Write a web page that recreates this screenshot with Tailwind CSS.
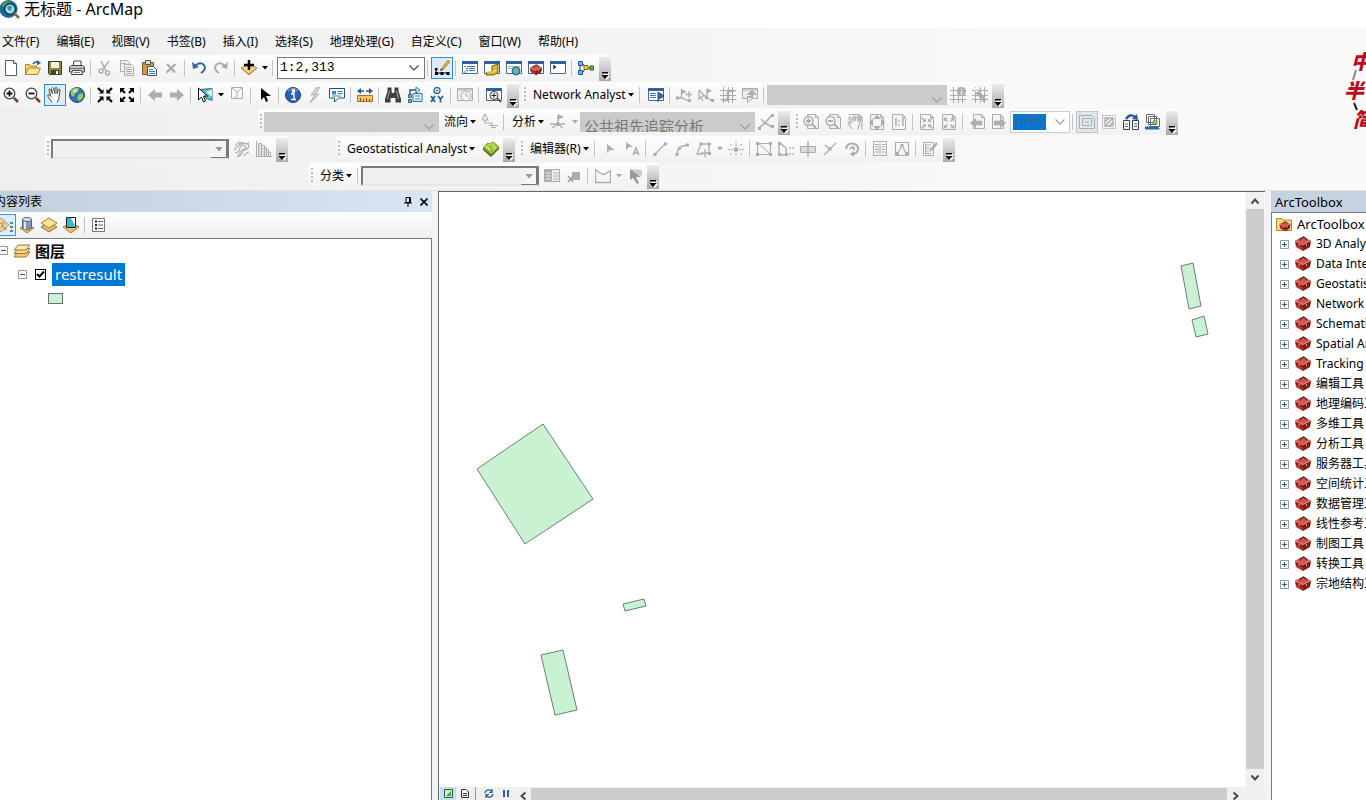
<!DOCTYPE html>
<html lang="zh-CN">
  <head>
    <title>无标题 - ArcMap</title>
    <meta charset="utf-8">
    <meta name="viewport" content="width=device-width, initial-scale=1.0">
    <script src="https://cdn.jsdelivr.net/npm/@tailwindcss/browser@4"></script>
  </head>
  <body class="flex h-screen flex-col overflow-hidden bg-[#f4f4f4] font-['Noto_Sans','Noto_Sans_CJK_SC',sans-serif] text-[12px] leading-4 text-black">
    <!-- icon sprite -->
    <svg class="hidden" xmlns="http://www.w3.org/2000/svg">
      <symbol id="app" viewBox="0 0 20 20"><circle cx="8.500" cy="9" r="9" fill="#1d6d98"/><path d="M2 5q4-5 9-3l3 3-4 1-2 4-4-1z" fill="#5fa64e"/><circle cx="10" cy="9" r="5.500" fill="#9fe0ee" stroke="#0c4767" stroke-width="2"/><path d="M7 7q3-3 5 0l-1 4-3-1z" fill="#3a93a8"/><path d="M14 13l5 5" stroke="#8a6a33" stroke-width="2.500"/></symbol>
      <symbol id="new" viewBox="0 0 16 16"><path d="M2.500.5h8l3 3v12h-11z" fill="#fff" stroke="#4f5f6d"/><path d="M10.500.5v3h3" fill="#dce6ee" stroke="#4f5f6d"/></symbol>
      <symbol id="open" viewBox="0 0 16 16"><path d="M.5 14.500v-10h4l1 1.500h6v3" fill="#f3d36a" stroke="#a8832a"/><path d="M.5 14.500l3-6.500h12l-3 6.500z" fill="#ffe695" stroke="#a8832a"/><path d="M8 4q1-2.500 5-2" fill="none" stroke="#26609c" stroke-width="1.500"/><path d="M12 0l4 3-4 2.500z" fill="#26609c"/></symbol>
      <symbol id="save" viewBox="0 0 16 16"><path d="M1.500 1.500h13v13h-12l-1-1z" fill="#8e8642" stroke="#3d3920"/><path d="M4 2h8v6H4z" fill="#f3f1dc"/><path d="M4 10h8v5H4z" fill="#47422c"/><path d="M9 11h2v3H9z" fill="#fff"/></symbol>
      <symbol id="print" viewBox="0 0 16 16"><path d="M4 6l1-5h7v5" fill="#fff" stroke="#444"/><path d="M.5 7l2-1.500h11l2 1.500v5H.5z" fill="#c9c9c2" stroke="#444"/><path d="M3.500 10.500h9l1 4h-11z" fill="#fff" stroke="#444"/><path d="M11 8h2" stroke="#c8a33a"/><path d="M5 12.500h6M1 8.500h14" stroke="#777"/></symbol>
      <symbol id="cut" viewBox="0 0 16 16"><g fill="none" stroke="currentColor" stroke-width="1.500"><path d="M4 1l5 10M12 1L6 9"/><circle cx="4" cy="11" r="2"/><circle cx="10.500" cy="13" r="2"/></g></symbol>
      <symbol id="copy" viewBox="0 0 16 16"><g fill="#efefef" stroke="currentColor"><path d="M1.500.5h7l2 2v9h-9z"/><path d="M5.500 4.500h7l2 2v9h-9z"/><path d="M7 7.500h5M7 9.500h6M7 11.500h6M7 13.500h6M3 3.500h4"/></g></symbol>
      <symbol id="paste" viewBox="0 0 16 16"><path d="M1.500 2.500h11v12h-11z" fill="#cf9a43" stroke="#7d5a22"/><path d="M4.500.5h5v4h-5z" fill="#ddd" stroke="#555"/><path d="M6.500 6.500h6l3 3v6h-9z" fill="#fff" stroke="#2f5587"/><path d="M8 9.500h4M8 11.500h6M8 13.500h6" stroke="#3f74b5"/></symbol>
      <symbol id="del" viewBox="0 0 16 16"><path d="M4 4l8 8.500M12.500 4L3.500 12.500" stroke="currentColor" stroke-width="2.400"/></symbol>
      <symbol id="undo" viewBox="0 0 16 16"><path d="M4 6q5-5 9-1 3 4-3 8" fill="none" stroke="#31659c" stroke-width="2"/><path d="M1 2l1 7 6-2z" fill="#31659c"/></symbol>
      <symbol id="redo" viewBox="0 0 16 16"><path d="M12 6q-5-5-9-1-3 4 3 8" fill="none" stroke="currentColor" stroke-width="2"/><path d="M15 2l-1 7-6-2z" fill="currentColor"/></symbol>
      <symbol id="add" viewBox="0 0 16 16"><path d="M0 8l8-4 8 4-8 7z" fill="#f6d488" stroke="#b38b3d"/><path d="M0 8l8 6 8-6" fill="none" stroke="#b38b3d"/><path d="M8 0v10M3 5h10" stroke="#000" stroke-width="2.500"/></symbol>
      <symbol id="editor" viewBox="0 0 16 16"><path d="M2 9v4h12" fill="none" stroke="#000"/><path d="M1 8h2.500v2.500H1zM1 12h3v3H1zM6.500 12h3v3h-3zM12.500 12h3v3h-3z"/><path d="M7 9l7-9 2 2-7 8z" fill="#e5a939" stroke="#8a6a33" stroke-width=".6"/><path d="M6 11l1-2.500L9 10z" fill="#333"/></symbol>
      <symbol id="frame" viewBox="0 0 16 16"><path d="M.5 1.500h15v12H.5z" fill="#fff" stroke="#44668f"/><path d="M0 1h16v3H0z" fill="#31609a"/></symbol>
      <symbol id="toc" viewBox="0 0 16 16"><use href="#frame"/><path d="M2 6.500h2M5 6.500h8M4 8.500h2M7 8.500h6M4 10.500h2M7 10.500h6M2 12h2" stroke="#3178bd"/></symbol>
      <symbol id="catalog" viewBox="0 0 16 16"><use href="#frame"/><path d="M8 6l6-2v8l-4 3H2l1-3h5z" fill="#d5bd20" stroke="#776609"/><path d="M3 12h6l3-2" stroke="#fff4a0" fill="none"/></symbol>
      <symbol id="search" viewBox="0 0 16 16"><use href="#frame"/><path d="M2 6.500h12M2 8.500h5" stroke="#8cafd0"/><circle cx="10" cy="11" r="4" fill="#50a9cc" stroke="#25648a"/><path d="M8 10l3-2 1 3-2 2z" fill="#83bf52"/></symbol>
      <symbol id="box" viewBox="0 0 16 16"><path d="M0 4.500L8 1l8 3.500L8 9z" fill="#d2574c"/><path d="M0 4.500L8 8.500V15L1 11z" fill="#b3302b"/><path d="M8 8.500l8-4-1 6.500-7 4z" fill="#8c1d1b"/><path d="M5 4.500V3l3.500-2L11 2.500V4" fill="none" stroke="#4d1616" stroke-width="1.200"/><path d="M0 4.500l8 4 8-4" fill="none" stroke="#e9a08e" stroke-width=".8"/><path d="M.5 7.500L8 11.200l7.500-3.700" fill="none" stroke="#5c1414"/><path d="M4 8v2M11.500 8v2" stroke="#e2a98c"/></symbol>
      <symbol id="toolbox" viewBox="0 0 16 16"><use href="#frame"/><use href="#box" x="2" y="4" width="12" height="12"/></symbol>
      <symbol id="python" viewBox="0 0 16 16"><use href="#frame"/><path d="M3 5.500l2.500 1.500L3 8.500" fill="none" stroke="#000" stroke-width="1.200"/></symbol>
      <symbol id="model" viewBox="0 0 16 16"><path d="M2 4v8h3L8 8h6M4 3l4 5" fill="none" stroke="#333"/><path d="M.5 1.500h4v4h-4zM.5 10.500h4v4h-4z" fill="#69b4ed" stroke="#155c9c"/><path d="M6 5.500h4v4H6z" fill="#ead34c" stroke="#816d0c"/><path d="M12 6h3.500v4H12z" fill="#65b84d" stroke="#286921"/></symbol>
      <symbol id="zin" viewBox="0 0 16 16"><circle cx="6.500" cy="6.500" r="5.300" fill="#fff" stroke="#444" stroke-width="1.300"/><path d="M11 11l4 4" stroke="#7d3c2b" stroke-width="2.500"/><path d="M3.500 6.500h6M6.500 3.500v6" stroke="#111" stroke-width="1.800"/></symbol>
      <symbol id="zout" viewBox="0 0 16 16"><circle cx="6.500" cy="6.500" r="5.300" fill="#fff" stroke="#444" stroke-width="1.300"/><path d="M11 11l4 4" stroke="#7d3c2b" stroke-width="2.500"/><path d="M3.500 6.500h6" stroke="#111" stroke-width="1.800"/></symbol>
      <symbol id="hand" viewBox="0 0 16 16"><path d="M5 15.500L1 9.500q-1-2 1-2l2 2-2-6q0-2 1.500-1l2 4-1-5q1-2 2 0l1.500 5V1q1.500-1 2 0v5.500l1.500-4q1.500-1 1.500 1l-1 6v2l-2 4" fill="#fff" stroke="#444"/></symbol>
      <symbol id="globe" viewBox="0 0 16 16"><circle cx="8" cy="8" r="7.500" fill="#2d73ae" stroke="#244b70"/><path d="M2 4q4-5 8-3l-1 4-3 1-1 4-3-2zM10 7l4-1v5l-4 3-2-3z" fill="#9dc66b"/><circle cx="6" cy="4" r="2" fill="#e4f5e8" opacity=".6"/></symbol>
      <symbol id="fin" viewBox="0 0 16 16"><path d="M1 1l4 4M15 1l-4 4M1 15l4-4M15 15l-4-4" stroke="currentColor" stroke-width="2"/><path d="M6.500 2v4.500H2zM9.500 2v4.500H14zM6.500 14V9.500H2zM9.500 14V9.500H14z" fill="currentColor"/></symbol>
      <symbol id="fout" viewBox="0 0 16 16"><path d="M2 2l4 4M14 2l-4 4M2 14l4-4M14 14l-4-4" stroke="currentColor" stroke-width="2"/><path d="M1 6V1h5zM15 6V1h-5zM1 10v5h5zM15 10v5h-5z" fill="currentColor"/></symbol>
      <symbol id="prev" viewBox="0 0 16 16"><path d="M1 8l7-6v3.500h7v5H8V14z" fill="currentColor"/></symbol>
      <symbol id="next" viewBox="0 0 16 16"><path d="M15 8L8 2v3.500H1v5h7V14z" fill="currentColor"/></symbol>
      <symbol id="sel" viewBox="0 0 16 16"><path d="M3 2.500l12-1v12l-6-2z" fill="#57bfc9" stroke="#41666e"/><path d="M9 5l6-3v8" fill="#d8f3f3"/><path d="M1.500 1v12l3-3 2 5 2-1-2-5h4z" fill="#fff" stroke="#111"/></symbol>
      <symbol id="clr" viewBox="0 0 16 16"><path d="M2.500.5h11v11h-11zM3 1l5 4 5-4M8 5v4l-3 2" fill="none" stroke="currentColor"/></symbol>
      <symbol id="arrow" viewBox="0 0 16 16"><path d="M4 1v12l3-3 2 5 2-1-2-5h5z" fill="currentColor"/></symbol>
      <symbol id="info" viewBox="0 0 16 16"><circle cx="8" cy="8" r="7.500" fill="#2864ac" stroke="#163f75"/><path d="M3 4q5-5 10 0" stroke="#88b1df" fill="none"/><path d="M6 7h3v5M6 12.500h5M7.500 3h2v2h-2z" fill="none" stroke="#fff" stroke-width="1.400"/></symbol>
      <symbol id="bolt" viewBox="0 0 16 16"><path d="M10 0L4 8h4l-5 8 9-9H8l5-7z" fill="#d8d8d8" stroke="currentColor"/></symbol>
      <symbol id="html" viewBox="0 0 16 16"><path d="M.5 1.500h15v9.500h-6l-4 4v-4h-5z" fill="#fff" stroke="#24506f"/><path d="M3 4h4v3.500H3z" fill="#3b8ab8"/><path d="M8.500 4.500h5M8.500 6.500h5M3 9h9" stroke="#3179a6"/></symbol>
      <symbol id="ruler" viewBox="0 0 16 16"><path d="M.5 8.500h15v6H.5z" fill="#f1c56e" stroke="#a0722e"/><path d="M3.500 11v3M6.500 12v2M9.500 11v3M12.500 12v2" stroke="#775320"/><path d="M2 4h5M9 4h5" stroke="#245b95" stroke-width="1.500"/><path d="M0 4l4-3v6zM16 4l-4-3v6z" fill="#245b95"/></symbol>
      <symbol id="find" viewBox="0 0 16 16"><path d="M2.500.5h4V4l.5 2h2l.5-2V.5h4V4L16 12v3.500h-5.500V11h-5v4.500H0V12l2.500-8z" fill="#3f3f3f"/><path d="M4.500 4L2.500 12M11.500 4l2 8" stroke="#ababab"/></symbol>
      <symbol id="route" viewBox="0 0 16 16"><path d="M3 7V3h6" fill="none" stroke="#245b95" stroke-width="1.500"/><path d="M9 0l4 3-4 3zM6 6.500h9v8H6z" fill="#e7f4fb" stroke="#2874a2"/><path d="M1.500 7.500h3v3h-3zM1.500 12.500h3v3h-3z" fill="#73b1d0" stroke="#286a91"/><path d="M8 9h5M8 12h5" stroke="#3d829d"/></symbol>
      <symbol id="xy" viewBox="0 0 16 16"><circle cx="8" cy="3.500" r="3" fill="none" stroke="#2371a4" stroke-width="1.400"/><circle cx="8" cy="3.500" r="1" fill="#2371a4"/><path d="M2 9l4 6M6 9l-4 6M9 9l2.500 3L14 9M11.500 12v3.500" stroke="#245e95" stroke-width="1.700" fill="none"/></symbol>
      <symbol id="time" viewBox="0 0 16 16"><path d="M.5 1.500h15v12H.5zM1 3h14" fill="#eee" stroke="currentColor"/><circle cx="9" cy="9" r="5" fill="#f5f5f5" stroke="currentColor"/><path d="M9 5.500V9h3" stroke="currentColor" fill="none"/></symbol>
      <symbol id="viewer" viewBox="0 0 16 16"><use href="#frame"/><circle cx="8" cy="8.500" r="4" fill="#fff" stroke="#333"/><path d="M5.500 8.500h5M8 6v5" stroke="#222"/><path d="M11 11l4 4" stroke="#8a4b2d" stroke-width="2"/></symbol>
      <symbol id="nawin" viewBox="0 0 16 16"><use href="#frame"/><path d="M2 6.500h6M2 8.500h6M2 10.500h6" stroke="#4976a5"/><path d="M10 15V5l6 4-5 3" fill="#3468b2" stroke="#264b82"/></symbol>
      <symbol id="flag1" viewBox="0 0 16 16"><path d="M1 11h5l7 3M5.500 11V2M13 4v7M9.500 7.500h6.500" fill="none" stroke="currentColor" stroke-width="1.300"/><path d="M5.500 2l5 3-5 2zM0 9.500h3v3H0zM12 12h3v3h-3z" fill="currentColor"/></symbol>
      <symbol id="flag2" viewBox="0 0 16 16"><path d="M1 3v9l2-2 2 4M1 3l6 6H4M9 10V2M8 10l6 4" fill="none" stroke="currentColor" stroke-width="1.300"/><path d="M9 1l5 3-5 2zM7 9h3v3H7zM13 12h3v3h-3z" fill="currentColor"/></symbol>
      <symbol id="grid" viewBox="0 0 16 16"><path d="M0 3.500h16M0 8.500h16M0 12.500h16M3.500 0v16M8.500 0v16M12.500 0v16" stroke="currentColor"/></symbol>
      <symbol id="solve" viewBox="0 0 16 16"><use href="#grid"/><path d="M2 13h6V4h6" fill="none" stroke="currentColor" stroke-width="2.500"/></symbol>
      <symbol id="dirs" viewBox="0 0 16 16"><path d="M.5 1.500h15v10h-5l-5 4v-4h-5zM1 3h14" fill="#eee" stroke="currentColor"/><path d="M5 10h5V6M7 7l3-3 3 3z" fill="none" stroke="currentColor" stroke-width="1.800"/></symbol>
      <symbol id="gridi" viewBox="0 0 16 16"><use href="#grid"/><circle cx="11.500" cy="4.500" r="4.500" fill="currentColor"/><path d="M11.500 2v1M11.500 4v4" stroke="#fff" stroke-width="1.300"/></symbol>
      <symbol id="gridw" viewBox="0 0 16 16"><use href="#grid"/><path d="M4 3l9 11" stroke="currentColor" stroke-width="4"/><path d="M2 1l4 4" stroke="#eee" stroke-width="2"/></symbol>
      <symbol id="flow" viewBox="0 0 16 16"><path d="M0 6h6L3 0zM3 6v3h7v3M7 11.500h9M9 13.500h5M11 15.500h1" fill="none" stroke="currentColor" stroke-width="1.200"/></symbol>
      <symbol id="net" viewBox="0 0 16 16"><path d="M8 9V1M0 10h15M8 10l-6 4M8 10l5 4" fill="none" stroke="currentColor" stroke-width="1.500"/><path d="M8 0l6 3-6 2.500z" fill="currentColor"/><circle cx="8" cy="10" r="2" fill="currentColor"/></symbol>
      <symbol id="trace" viewBox="0 0 16 16"><path d="M1 14l6-5 7-8M3 5l4 4 7 4" fill="none" stroke="currentColor" stroke-width="1.500"/><path d="M0 13h3v3H0zM13 0h3v3h-3zM13 11h3v3h-3z" fill="currentColor"/></symbol>
      <symbol id="page" viewBox="0 0 16 16"><path d="M1.500.5h10l3 3v12h-13zM11.500.5v3h3" fill="#f4f4f4" stroke="currentColor"/></symbol>
      <symbol id="pageback" viewBox="0 0 16 16"><path d="M4.500.5h8l3 3v11h-11zM12.500.5v3h3" fill="#f4f4f4" stroke="currentColor"/></symbol>
      <symbol id="pzin" viewBox="0 0 16 16"><use href="#pageback"/><circle cx="5.500" cy="7" r="4.500" fill="#f6f6f6" stroke="currentColor" stroke-width="1.500"/><path d="M3 7h5M5.500 4.500v5M9 10l4 4" stroke="currentColor" stroke-width="2"/></symbol>
      <symbol id="pzout" viewBox="0 0 16 16"><use href="#pageback"/><circle cx="5.500" cy="7" r="4.500" fill="#f6f6f6" stroke="currentColor" stroke-width="1.500"/><path d="M3 7h5M9 10l4 4" stroke="currentColor" stroke-width="2"/></symbol>
      <symbol id="phand" viewBox="0 0 16 16"><path d="M2 .5h10l3 3v12M12 1v3h3M5 15L1 9q0-2 3 0L2 4q1-2 2 0l2 3V3q1-2 2 0v4l1-4q2-1 2 1v3l2-2q1 0 0 3l-2 7" fill="none" stroke="currentColor" stroke-width="1.200"/></symbol>
      <symbol id="pfull" viewBox="0 0 16 16"><use href="#page"/><path d="M8 1l4 4H4zM8 16l4-4H4zM0 8.500l4-4v8zM16 8.500l-4-4v8z" fill="currentColor"/></symbol>
      <symbol id="pone" viewBox="0 0 16 16"><use href="#page"/><path d="M4 6l1-1v7M11 6l1-1v7M8 6v1.500M8 10v1.500" fill="none" stroke="currentColor" stroke-width="1.500"/></symbol>
      <symbol id="pfin" viewBox="0 0 16 16"><use href="#page"/><use href="#fin" x="2" y="3" width="12" height="12"/></symbol>
      <symbol id="pfout" viewBox="0 0 16 16"><use href="#page"/><use href="#fout" x="2" y="3" width="12" height="12"/></symbol>
      <symbol id="pprev" viewBox="0 0 16 16"><use href="#pageback"/><use href="#prev" x="0" y="2" width="14" height="14"/></symbol>
      <symbol id="pnext" viewBox="0 0 16 16"><path d="M1.500.5h8l3 3v11h-11zM9.500.5v3h3" fill="#f4f4f4" stroke="currentColor"/><use href="#next" x="2" y="2" width="14" height="14"/></symbol>
      <symbol id="draft" viewBox="0 0 16 16"><path d="M.5 1.500h12l3 3v10H.5zM3.500 4.500h9v7h-9zM6 8h4" fill="none" stroke="currentColor"/></symbol>
      <symbol id="focus" viewBox="0 0 16 16"><path d="M1.500 1.500h13v13h-13z" fill="none" stroke="currentColor" stroke-dasharray="2 1"/><path d="M4 4h8v8H4zM4 12l8-8M4 8l4-4M8 12l4-4" fill="none" stroke="currentColor" stroke-width="1.300"/></symbol>
      <symbol id="layout" viewBox="0 0 16 16"><path d="M.5 6.500h6v9h-6zM9.500 6.500h6v9h-6z" fill="#fff" stroke="#334155"/><path d="M2 10h3M2 12.500h3M11 10h3M11 12.500h3" stroke="#466b99"/><path d="M3 5q4-6 9-2" fill="none" stroke="#24599b" stroke-width="2.400"/><path d="M9 5l6 1-1-6z" fill="#24599b"/></symbol>
      <symbol id="ddp" viewBox="0 0 16 16"><path d="M1.500.5h8v8h-8zM3.500 2.500h8v8h-8zM5.500 4.500h9v8h-9z" fill="#fff" stroke="#6a6a6a"/><path d="M8 7h4v3H8z" fill="#b4ca67" stroke="#4a6533" stroke-width=".6"/><path d="M0 12.500h13l2 3H0z" fill="#2d66a4"/></symbol>
      <symbol id="contour" viewBox="0 0 16 16"><path d="M1 5q4-5 8-3t6-1M0 9q4-3 5-5t9-1q2 3-2 6-3-1-4 3l-3 4M1 12q5-1 5-5t5-2q2 2-1 3-3 1-4 4l-3 4M10 15q1-3 5-4" fill="none" stroke="currentColor" stroke-width="1.200"/></symbol>
      <symbol id="hist" viewBox="0 0 16 16"><path d="M2 3h4v3h3v1h2v3h2v5H2z" fill="#dedede"/><path d="M.5 0v15.500H16M2.500 15V2.500h3V15M5.500 4.500h3V15M8.500 6.500h2V15M10.500 8.500h2V15M12.500 11.500h2V15" fill="none" stroke="currentColor"/></symbol>
      <symbol id="geo" viewBox="0 0 16 16"><path d="M0 7l5-5 2 1 3-2 6 5-8 8z" fill="#9cc636" stroke="#637c1e" stroke-width=".8"/><path d="M3 5l4 4M6 3l5 6M9 2.500l4 5" stroke="#e8f28b" stroke-width="1.200"/><path d="M2 7l6 6M7 4l3 6" stroke="#73962a"/><path d="M0 7v2l8 7 8-8V6l-8 8z" fill="#4f7220"/></symbol>
      <symbol id="eplay" viewBox="0 0 16 16"><path d="M5 3l8 6H8l-3 3z" fill="currentColor"/></symbol>
      <symbol id="eann" viewBox="0 0 16 16"><path d="M2 1l7 5H5L2 9z" fill="currentColor"/><path d="M9 14l3-7 3 7M10 12h4" fill="none" stroke="currentColor" stroke-width="1.500"/></symbol>
      <symbol id="line" viewBox="0 0 16 16"><path d="M3 13L13 3" stroke="currentColor" stroke-width="1.300"/><path d="M1.500 12h3v3h-3zM12 1.500h3v3h-3z" fill="currentColor"/></symbol>
      <symbol id="arc" viewBox="0 0 16 16"><path d="M3 13q0-8 10-9" fill="none" stroke="currentColor" stroke-width="1.300"/><path d="M1.500 12h3v3h-3zM12 2.500h3v3h-3zM4 6h3v3H4z" fill="currentColor"/></symbol>
      <symbol id="poly" viewBox="0 0 16 16"><path d="M5 3h8v9M5 3L1 13h6M9 8v8M5 12h8" fill="none" stroke="currentColor" stroke-width="1.300"/><path d="M3.500 1.500h3v3h-3zM12 1.500h3v3h-3zM12 11h3v3h-3z" fill="currentColor"/></symbol>
      <symbol id="point" viewBox="0 0 16 16"><path d="M6 6.500h4v4H6z" fill="currentColor"/><path d="M8 0v5M8 12v4M0 8.500h5M11 8.500h5M2 3l3 2M14 3l-3 2M2 14l3-2M14 14l-3-2" stroke="currentColor" stroke-dasharray="2 1"/></symbol>
      <symbol id="edv" viewBox="0 0 16 16"><path d="M1.500 2.500v11h13v-11h-12l12 11" fill="none" stroke="currentColor"/><path d="M0 1h3v3H0zM0 12h3v3H0zM13 12h3v3h-3zM13 1h3v3h-3z" fill="currentColor"/></symbol>
      <symbol id="reshape" viewBox="0 0 16 16"><path d="M1 2v12h7V7L2 2M12 6v2M12 12v2M15 6v2M15 12v2" fill="none" stroke="currentColor" stroke-width="1.300"/><path d="M0 1h3v3H0zM0 12h3v3H0zM7 12h3v3H7z" fill="currentColor"/></symbol>
      <symbol id="cutp" viewBox="0 0 16 16"><path d="M.5 5.500h15v6H.5z" fill="#ddd" stroke="currentColor"/><path d="M8 0v16" stroke="currentColor" stroke-width="1.500"/></symbol>
      <symbol id="split" viewBox="0 0 16 16"><path d="M2 14L14 2M3 4l5 4" stroke="currentColor" stroke-width="1.300"/><path d="M6.500 6.500h3v3h-3z" fill="currentColor"/></symbol>
      <symbol id="rotate" viewBox="0 0 16 16"><path d="M2 8q1-6 7-5.500 6 1.500 5 6.500-1 3-4 4M6 8q2-3 4-1v2" fill="none" stroke="currentColor" stroke-width="2"/><path d="M10 10l-4 3 4 3z" fill="currentColor"/></symbol>
      <symbol id="attr" viewBox="0 0 16 16"><path d="M1.500.5h13v14h-13zM8 2v11M3 3.500h4M3 6h4M3 8.500h4M3 11h4M9.500 3.500h4M9.500 6h4M9.500 8.500h4M9.500 11h4" fill="none" stroke="currentColor"/></symbol>
      <symbol id="sketch" viewBox="0 0 16 16"><path d="M1.500 1.500h13v13h-13zM4 12l4-8 4 8" fill="none" stroke="currentColor" stroke-width="1.200"/><path d="M2 11h3v3H2zM6.500 3h3v3h-3zM11 11h3v3h-3z" fill="currentColor"/></symbol>
      <symbol id="create" viewBox="0 0 16 16"><path d="M1.500 1.500h10v13h-10zM3 4h6M3 7h5M3 10h4M3 12.500h6M3.500 3v10" fill="none" stroke="currentColor"/><path d="M8 10l7-8" stroke="currentColor" stroke-width="2.500"/></symbol>
      <symbol id="tbl" viewBox="0 0 16 16"><path d="M.5 1.500h15v12H.5z" fill="#eee" stroke="currentColor"/><path d="M1 2h7v11H1z" fill="currentColor"/><path d="M2 5h5M2 8h5M2 11h5" stroke="#eee"/><path d="M9.500 5h5M9.500 8h5M9.500 11h5" stroke="currentColor"/></symbol>
      <symbol id="clrs" viewBox="0 0 16 16"><path d="M6 4h8v8H6z" fill="currentColor"/><path d="M2 8l5 6M7 8l-5 6" stroke="#999" stroke-width="1.300"/></symbol>
      <symbol id="area" viewBox="0 0 16 16"><path d="M.5 1.500v13h15v-12l-6 4-4-1z" fill="none" stroke="currentColor" stroke-width="1.300"/></symbol>
      <symbol id="pick" viewBox="0 0 16 16"><path d="M2 1l12 1v6L8 6z" fill="#ccc"/><path d="M2 1v11l3-2 4 6 2-1-3-6h5z" fill="#9a9a9a"/></symbol>
      <symbol id="tri" viewBox="0 0 6 4"><path d="M0 0h6L3 3.500z" fill="currentColor"/></symbol>
      <symbol id="more" viewBox="0 0 12 24"><path d="M4 16h6v2H4zM4 19h7l-3.500 4z" fill="#fff"/><path d="M3 15h6v1.500H3zM2.500 18h7L6 22z"/></symbol>
      <symbol id="grip" viewBox="0 0 6 16"><path d="M2 0h2v2H2zM2 4h2v2H2zM2 8h2v2H2zM2 12h2v2H2z" fill="#bcbcbc"/></symbol>
      <symbol id="chev" viewBox="0 0 10 6"><path d="M.5.5L5 5 9.500.5" fill="none" stroke="currentColor" stroke-width="1.200"/></symbol>
      <symbol id="lyr" viewBox="0 0 16 16"><path d="M0 10l8-5 8 5-8 5z" fill="#e4b76b" stroke="#9c7533"/><path d="M0 6l8-5 8 5-8 5z" fill="#fbe29f" stroke="#a9843f"/></symbol>
      <symbol id="order" viewBox="0 0 16 16"><path d="M5 4v8h5" stroke="#777" fill="none"/><path d="M0 4l4-3 4 3-4 3zM5 8l4-3 3 3-4 3zM1 12l4-3 3 3-4 3z" fill="#f3cf83" stroke="#ad8846" stroke-width=".7"/><path d="M13 6h3M13 10h3M13 14h3" stroke="#2b5c8a" stroke-width="1.500"/></symbol>
      <symbol id="source" viewBox="0 0 16 16"><path d="M1 11l7-3 7 3-7 5z" fill="#e6b566" stroke="#a27d3e"/><path d="M3.500 2v9q4.500 3 9 0V2z" fill="#8596ae" stroke="#58667a"/><path d="M6 3v9" stroke="#dae4f1" stroke-width="2"/><ellipse cx="8" cy="2.500" rx="4.500" ry="2" fill="#dce5ef" stroke="#58667a"/></symbol>
      <symbol id="visib" viewBox="0 0 16 16"><path d="M0 10l8-4 8 4-8 6z" fill="#edbd6d" stroke="#b17939"/><path d="M3.500.5h9v10h-9z" fill="#3ab6cf" stroke="#222"/><path d="M8 1h4v8z" fill="#fff"/></symbol>
      <symbol id="opts" viewBox="0 0 16 16"><path d="M1.500 1.500h12v13h-12z" fill="#fff" stroke="#777"/><path d="M4 4.500h2M4 8h2M4 11.500h2" stroke="#222" stroke-width="2"/><path d="M7 4.500h5M7 8h5M7 11.500h5" stroke="#4c678f"/></symbol>
      <symbol id="layers" viewBox="0 0 16 14"><path d="M4 8h12l-4 5H0z" fill="#f5cb77" stroke="#a17628"/><path d="M4 4.500h12l-4 5H0z" fill="#f7d78f" stroke="#a17628"/><path d="M4 1h12l-4 5H0z" fill="#fae7b5" stroke="#a17628"/></symbol>
      <symbol id="folder" viewBox="0 0 16 16"><path d="M.5 14.500v-12h5l1 1.500h9v10.500z" fill="#f6dc7d" stroke="#a8882c"/><use href="#box" x="3" y="5" width="12" height="11"/></symbol>
      <symbol id="plus" viewBox="0 0 9 9"><path d="M.5.5h8v8h-8z" fill="#fafafa" stroke="#8f9bab"/><path d="M2 4.500h5M4.500 2v5" stroke="#3c527f"/></symbol>
      <symbol id="minus" viewBox="0 0 9 9"><path d="M.5.5h8v8h-8z" fill="#fafafa" stroke="#9a9a9a"/><path d="M2 4.500h5" stroke="#3c527f"/></symbol>
      <symbol id="up" viewBox="0 0 10 8"><path d="M1.500 6.500L5 2.500l3.500 4" fill="none" stroke="#4a4a4a" stroke-width="2"/></symbol>
    </svg>

    <div class="flex h-[28px] shrink-0 items-start gap-1 bg-white">
      <svg class="h-5 w-5"><use href="#app"/></svg>
      <h1 class="text-[16px] leading-[19px]">无标题 - ArcMap</h1>
    </div>

    <header class="h-[163px] shrink-0 border-b border-[#e2e2e2] bg-linear-to-r from-[#efefef] to-[#f9f9f9] to-80%">
      <nav id="menu" class="flex h-[27px] items-center gap-[17px] pl-[2px]"></nav>
      <div id="toolbars"></div>
    </header>

    <main class="flex min-h-0 flex-1">
      <aside class="flex w-[432px] shrink-0 flex-col">
        <div class="flex h-[21px] shrink-0 items-center bg-linear-to-r from-[#c2cfdd] to-[#d8e5f3]">
          <h2 class="-ml-[6px] flex-1">内容列表</h2>
          <button class="grid h-4 w-4 place-items-center" aria-label="自动隐藏"><svg class="h-[10px] w-2" viewBox="0 0 8 10"><path d="M2 .5h4.500v5H2zM5.500 1v5M0 6h8M4 6v4" fill="none" stroke="#000"/></svg></button>
          <button class="grid h-4 w-4 place-items-center" aria-label="关闭"><svg class="h-2 w-2" viewBox="0 0 8 8"><path d="M.5.5l7 7M7.500.5l-7 7" stroke="#000" stroke-width="1.600"/></svg></button>
        </div>
        <div class="flex h-[26px] shrink-0 items-center bg-linear-to-b from-[#fdfdfd] to-[#efefef]">
          <button class="-ml-[6px] grid h-[22px] w-[22px] place-items-center border border-[#3d95d9] bg-[#dcedfa]" aria-label="按绘制顺序列出"><svg class="h-4 w-4"><use href="#order"/></svg></button>
          <button class="grid h-[22px] w-[22px] place-items-center" aria-label="按源列出"><svg class="h-4 w-4"><use href="#source"/></svg></button>
          <button class="grid h-[22px] w-[22px] place-items-center" aria-label="按可见性列出"><svg class="h-4 w-4"><use href="#lyr"/></svg></button>
          <button class="grid h-[22px] w-[22px] place-items-center" aria-label="按选择列出"><svg class="h-4 w-4"><use href="#visib"/></svg></button>
          <span class="mr-[3px] ml-[2px] h-4 w-px bg-[#bdbdbd]"></span>
          <button class="grid h-[22px] w-[22px] place-items-center" aria-label="选项"><svg class="h-4 w-4"><use href="#opts"/></svg></button>
        </div>
        <div class="flex-1 border-t border-r border-[#7a7a7a] bg-white">
          <div class="flex h-[23px] items-center">
            <svg class="-ml-px h-[9px] w-[9px]"><use href="#minus"/></svg>
            <svg class="ml-[6px] h-[14px] w-4"><use href="#layers"/></svg>
            <b class="ml-[5px] text-[15px]">图层</b>
          </div>
          <div class="flex h-6 items-center pl-[18px]">
            <svg class="h-[9px] w-[9px]"><use href="#minus"/></svg>
            <label class="flex items-center">
              <input type="checkbox" checked class="ml-2 h-[11px] w-[11px] appearance-none border border-black bg-white">
              <svg class="-ml-[10px] h-[9px] w-[9px]" viewBox="0 0 9 9"><path d="M1 4l2.500 2.500L8 1.500" fill="none" stroke="#000" stroke-width="2"/></svg>
              <span class="ml-[7px] bg-[#0078d7] px-[3px] text-[15px] leading-[23px] text-white">restresult</span>
            </label>
          </div>
          <div class="ml-12 mt-[7px] h-[11px] w-[15px] border border-[#6e6e6e] bg-[#c8f2d1]"></div>
        </div>
      </aside>

      <section class="ml-[6px] flex min-w-0 flex-1 flex-col border-t border-l border-[#666]">
        <div class="flex min-h-0 flex-1">
          <svg class="h-full min-w-0 flex-1 bg-white" fill="#c8f2d1" stroke="#6e7f72">
            <path d="M104 232l50 75-68 45-48-75zM184 412l21-5 2 7-21 5zM102 463l22-5 14 60-22 5zM742 74l12-3 8 43-12 3zM753 128l12-4 4 18-12 3z"/>
          </svg>
          <div class="flex w-[20px] flex-col items-center border-x border-[#f8f8f8] bg-[#f0f0f0]">
            <button class="grid h-[17px] w-full shrink-0 place-items-center" aria-label="向上滚动"><svg class="h-2 w-[10px]"><use href="#up"/></svg></button>
            <div class="w-full flex-1 bg-[#cdcdcd]"></div>
            <button class="grid h-[18px] w-full shrink-0 place-items-center" aria-label="向下滚动"><svg class="h-2 w-[10px] rotate-180"><use href="#up"/></svg></button>
          </div>
        </div>
        <div class="flex h-[13px] shrink-0 items-center overflow-hidden bg-[#f0f0f0] pr-5 pl-px">
          <button class="grid h-full w-4 place-items-center bg-[#c5def5]" aria-label="数据视图"><svg class="h-[9px] w-[9px]" viewBox="0 0 9 9"><path d="M.5.5h8v8h-8z" fill="#d6edb4" stroke="#285b52"/><path d="M2 7l5-5v5z" fill="#5b9c51"/></svg></button>
          <button class="grid h-full w-[18px] place-items-center" aria-label="布局视图"><svg class="h-[9px] w-2" viewBox="0 0 8 9"><path d="M.5.5H5L7.500 3v5.500h-7zM2 4.500h4M2 6.500h4" fill="#fff" stroke="#333"/></svg></button>
          <span class="ml-px h-full w-px bg-[#999]"></span>
          <button class="ml-1 grid h-full w-[18px] place-items-center" aria-label="刷新"><svg class="h-[9px] w-[10px]" viewBox="0 0 10 9"><path d="M1 4q1-4 5-3l2 2M9 5q-1 4-5 3L2 6M8 0v3.500H5M2 9V5.500h3" fill="none" stroke="#245b95" stroke-width="1.200"/></svg></button>
          <button class="grid h-full w-4 place-items-center" aria-label="暂停绘制"><svg class="h-[7px] w-[6px]" viewBox="0 0 6 7"><path d="M1 0v7M5 0v7" stroke="#2d61a3" stroke-width="2"/></svg></button>
          <button class="grid h-full w-[17px] place-items-end justify-center" aria-label="向左滚动"><svg class="h-2 w-[10px] -rotate-90"><use href="#up"/></svg></button>
          <div class="h-full flex-1 border-t border-[#f0f0f0] bg-[#cdcdcd]"></div>
          <button class="grid h-full w-[18px] place-items-end justify-center" aria-label="向右滚动"><svg class="h-2 w-[10px] rotate-90"><use href="#up"/></svg></button>
        </div>
      </section>

      <aside class="ml-[6px] flex w-[95px] shrink-0 flex-col overflow-hidden">
        <h2 class="flex h-[21px] shrink-0 items-center bg-[#c5d3e1] pl-1 text-[13px]">ArcToolbox</h2>
        <div class="flex-1 border-t border-l border-[#7a7a7a] bg-white whitespace-nowrap">
          <div class="flex h-[21px] items-center pl-1">
            <svg class="h-4 w-4 shrink-0"><use href="#folder"/></svg><span class="ml-[5px] text-[13px]">ArcToolbox</span>
          </div>
          <ul id="tree"></ul>
        </div>
      </aside>
    </main>

    <!-- floating input method bar -->
    <div class="absolute top-[50px] right-0 flex h-[82px] w-[22px] flex-col justify-between overflow-hidden text-[20px] leading-6 font-black text-[#bd0b20] italic">
      <span class="ml-[7px]">中</span>
      <span>半</span>
      <span class="ml-[9px]">简</span>
      <svg class="absolute inset-0 h-full w-full" fill="none" stroke-width="2"><path d="M12 20l-3 10" stroke="#888"/><path d="M10 53l3 7" stroke="#222"/></svg>
    </div>

    <script>
      const menus = ["文件(F)", "编辑(E)", "视图(V)", "书签(B)", "插入(I)", "选择(S)", "地理处理(G)", "自定义(C)", "窗口(W)", "帮助(H)"];

      // "name:label" is a button, a leading "-" disables it, a leading "+" presses it.
      // "|" separator, "v" drop arrow, "_" 1px space, "#" grip, "T:text" menu button,
      // "S:kind:label:value" drop-down, ">" overflow.
      const rows = [
        [
          ["", "new:新建 open:打开 save:保存 print:打印 | -cut:剪切 -copy:复制 paste:粘贴 -del:删除 | undo:撤消 -redo:恢复 | add:添加数据 v | _ S:scale:比例尺:1:2,313 | +editor:编辑器工具条 | toc:内容列表 catalog:目录 search:搜索 toolbox:工具箱 python:Python | model:模型构建器 _ _ >"],
        ],
        [
          ["", "zin:放大 zout:缩小 +hand:平移 globe:全图 | fin:固定比例放大 fout:固定比例缩小 | -prev:上一视图 -next:下一视图 | sel:选择要素 v -clr:清除选择 | arrow:选择元素 | info:识别 -bolt:超链接 html:HTML弹出窗口 | ruler:测量 | find:查找 route:查找路径 xy:转到XY | -time:时间滑块 | _ viewer:查看器窗口 _ _ >"],
          ["ml-[3px]", "# T:Network_Analyst | _ _ nawin:网络分析窗口 | -flag1:创建位置 -flag2:选择位置 -solve:求解 -dirs:方向 | S:gray180:网络数据集: -gridi:标识 -gridw:构建 _ >"],
        ],
        [
          ["ml-[258px]", "# S:gray175:几何网络: T:流向 -flow:显示流向 | T:分析 -net:标志 _ -v S:gray175:追踪任务:公共祖先追踪分析 -trace:追踪 _ >"],
          ["ml-1", "# -pzin:放大 -pzout:缩小 -phand:平移 -pfull:整页 -pone:1:1 | -pfin:放大 -pfout:缩小 | -pprev:上一范围 -pnext:下一范围 S:zoom:缩放:100% | -+draft:草图模式 -focus:焦点 layout:更改布局 ddp:数据驱动页面 _ _ >"],
        ],
        [
          ["ml-[45px]", "# S:classic:图层: _ _ -contour:等值线 -hist:直方图 _ >"],
          ["ml-12", "# T:Geostatistical_Analyst _ _ geo:向导 _ >"],
          ["ml-1", "# T:编辑器(R) | _ -eplay:编辑 -eann:注记 | -line:直线 -arc:弧 -poly:追踪 -v -point:点 | -edv:折点 -reshape:整形 -cutp:裁剪 -split:分割 -rotate:旋转 | -attr:属性 -sketch:草图 | -create:创建 _ _ >"],
        ],
        [
          ["ml-[309px]", "# T:分类 | S:classic:栅格图层: _ _ -tbl:样本 -clrs:清除 | _ -area:绘制 -v _ -pick:选择 >"],
        ],
      ];

      const kinds = {
        scale: ["w-[148px] h-[22px]", "bg-white border border-[#777] pl-[2px] font-['Liberation_Mono',monospace] text-[13px]", "right-[6px] text-[#444]"],
        gray180: ["w-[180px] h-5", "bg-[#cbcbcb]", "right-[5px] mt-1 text-[#a0a0a0]"],
        gray175: ["w-[175px] h-5", "bg-[#cbcbcb] pl-1 pt-1 text-[15px] leading-5 text-[#777]", "right-[5px] mt-1 text-[#a0a0a0]"],
        zoom: ["w-[60px] h-[22px]", "bg-white border border-[#ccc]", "right-[5px] text-[#999]"],
        classic: ["w-[178px] h-5", "bg-[#f0f0f0] border-2 border-[#7a7a7a] border-b-[#e6e6e6]", ""],
      };

      function drawSelect(kind, label, value) {
        const [size, look, chevron] = kinds[kind];
        const mark = kind === "classic"
          ? `<span class="pointer-events-none absolute top-[2px] right-[2px] bottom-px grid w-4 place-items-center border-r border-b border-[#777] bg-[#f4f4f4] text-[#999]"><svg class="h-[5px] w-[8px]"><use href="#tri"/></svg></span>`
          : `<svg class="pointer-events-none absolute top-2 h-[6px] w-[10px] ${chevron}"><use href="#chev"/></svg>`;
        const picked = kind === "zoom"
          ? `<span class="pointer-events-none absolute top-[3px] left-[3px] h-4 w-[33px] bg-[#0078d7] font-['Liberation_Mono',monospace] text-[13px] leading-4 text-[#45648a]">${value}</span>`
          : "";
        return `<div class="relative shrink-0 ${size}"><select aria-label="${label}" class="block h-full w-full appearance-none overflow-hidden ${look}"><option>${kind === "zoom" ? "" : value}</option></select>${picked}${mark}</div>`;
      }

      function drawItem(item) {
        if (item === "|") return `<span class="mr-[3px] ml-[2px] h-4 w-px shrink-0 bg-[#c4c4c4]"></span>`;
        if (item === "_") return `<span class="w-px shrink-0"></span>`;
        if (item === "#") return `<svg class="h-4 w-[6px] shrink-0"><use href="#grip"/></svg>`;
        if (item === "v" || item === "-v") {
          return `<button aria-label="更多" class="grid h-[22px] w-[10px] shrink-0 place-items-center ${item === "v" ? "" : "text-[#aaa]"}"><svg class="h-1 w-[6px]"><use href="#tri"/></svg></button>`;
        }
        if (item === ">") {
          return `<button aria-label="工具条选项" class="h-6 w-3 shrink-0 self-end bg-linear-to-b from-[#ececec] to-[#a9a9a9]"><svg class="h-6 w-3"><use href="#more"/></svg></button>`;
        }
        if (item.startsWith("T:")) {
          return `<button class="flex h-[22px] shrink-0 items-center gap-[2px] pr-[3px] pl-[5px] whitespace-nowrap">${item.slice(2).replace("_", " ")}<svg class="h-1 w-[6px]"><use href="#tri"/></svg></button>`;
        }
        if (item.startsWith("S:")) {
          const [, kind, label, ...value] = item.split(":");
          return drawSelect(kind, label, value.join(":"));
        }
        const [, flags, icon, label] = item.match(/^([-+]*)(\w+):(.*)$/);
        const off = flags.includes("-");
        let look = off ? "text-[#adadad]" : "text-black";
        if (flags.includes("+")) {
          look += off ? " border border-[#b5c4d1] bg-[#dfe7ee]" : " border border-[#2f8ad8] bg-[#dcebf8]";
        }
        return `<button aria-label="${label}" class="grid h-[22px] w-[22px] shrink-0 place-items-center ${look}"><svg class="h-4 w-4"><use href="#${icon}"/></svg></button>`;
      }

      document.getElementById("menu").innerHTML = menus
        .map((m) => `<button class="whitespace-nowrap">${m}</button>`).join("");

      document.getElementById("toolbars").innerHTML = rows.map((bars) =>
        `<div class="flex h-[27px]">${
          bars.map(([margin, items]) =>
            `<div role="toolbar" class="flex h-[26px] shrink-0 items-center bg-linear-to-b from-[#fdfdfd] to-[#f1f1f1] ${margin}">${
              items.split(" ").map(drawItem).join("")
            }</div>`
          ).join("")
        }</div>`
      ).join("");

      const tools = ["3D Analyst 工具", "Data Interoperability 工具", "Geostatistical Analyst 工具", "Network Analyst 工具", "Schematics 工具", "Spatial Analyst 工具", "Tracking Analyst 工具", "编辑工具", "地理编码工具", "多维工具", "分析工具", "服务器工具", "空间统计工具", "数据管理工具", "线性参考工具", "制图工具", "转换工具", "宗地结构工具"];
      document.getElementById("tree").innerHTML = tools.map((t) =>
        `<li class="flex h-5 items-center pl-2"><svg class="h-[9px] w-[9px] shrink-0"><use href="#plus"/></svg><svg class="ml-[6px] h-4 w-4 shrink-0"><use href="#box"/></svg><span class="ml-[5px]">${t}</span></li>`
      ).join("");
    </script>
  </body>
</html>
